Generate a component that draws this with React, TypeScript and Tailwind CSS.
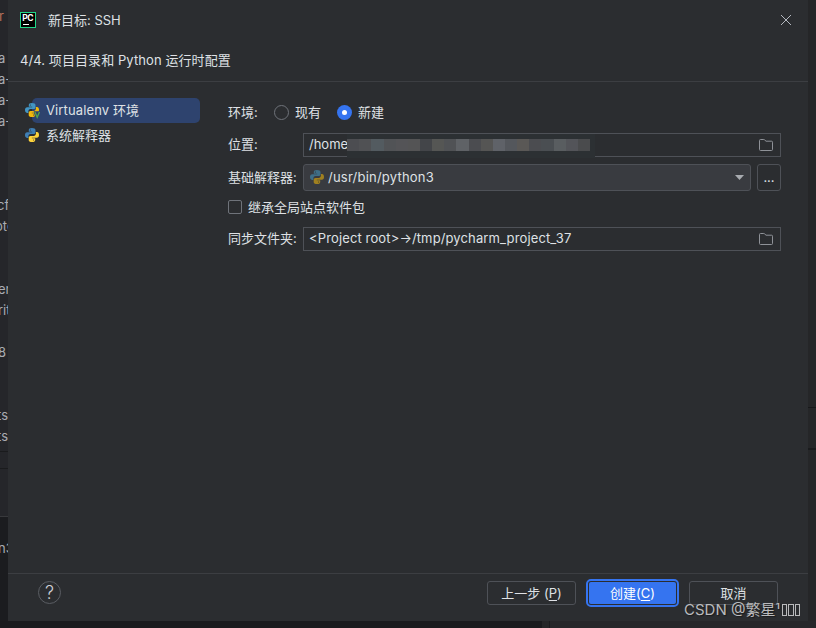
import { useState } from "react";
import type { ReactNode } from "react";

const editorLines = [
  { row: 0, text: "r", className: "-ml-px text-[#b8705a]" },
  { row: 2, text: "a", className: "-ml-0.5" },
  { row: 3, text: "a-", className: "-ml-0.5" },
  { row: 4, text: "a-", className: "-ml-0.5" },
  { row: 5, text: "a-", className: "-ml-0.5" },
  { row: 9, text: "cf", className: "-ml-[3px]" },
  { row: 10, text: "ote", className: "-ml-[5px]" },
  { row: 13, text: "er", className: "-ml-0.5" },
  { row: 14, text: "rit", className: "-ml-0.5" },
  { row: 16, text: "8", className: "-ml-0.5" },
  { row: 19, text: "ts", className: "-ml-[3px]" },
  { row: 20, text: "ts", className: "-ml-[3px]" },
];

const mosaic = [
  "#4c4d51", "#505154", "#535b60", "#515356", "#545457", "#545455", "#434549",
  "#555654", "#505255", "#5f6266", "#4b4c50", "#555554", "#5f6268", "#54575c",
  "#5a5856", "#4b4c50", "#4a4e52", "#595d60", "#535459", "#4a4b4d",
];

function PythonIcon({ dim = false, venv = false }: { dim?: boolean; venv?: boolean }) {
  const blue = dim ? "#3f6f88" : venv ? "#4295c4" : "#3f7fb5";
  const yellow = dim ? "#a08020" : venv ? "#f2b90c" : "#ffd43b";

  return (
    <svg width="16" height="16" viewBox="0 0 16 16" className="shrink-0 overflow-visible">
      <path
        d="M7.9 1C5.6 1 4.8 1.9 4.8 3.1V4.7H8.2V5.3H3.2C1.8 5.3 1 6.4 1 8.1s.8 2.8 2 2.8h1.4V9.2c0-1.2 1-2.1 2.2-2.1h3.2c1 0 1.7-.8 1.7-1.8V3.1C11.5 1.8 10.2 1 7.9 1Z"
        fill={blue}
      />
      <path
        d="M8.1 15c2.3 0 3.1-.9 3.1-2.1v-1.6H7.8v-.6h5c1.4 0 2.2-1.1 2.2-2.8s-.8-2.8-2-2.8h-1.1v1.7c0 1.2-1 2.1-2.2 2.1H6.4c-1 0-1.7.8-1.7 1.8v2.2C4.7 14.2 5.8 15 8.1 15Z"
        fill={yellow}
      />
      <circle cx="6.4" cy="2.9" r=".5" fill="#2b2d30" />
      <circle cx="9.6" cy="13.1" r=".5" fill="#2b2d30" />
      {venv && (
        <>
          <path d="M9.6 9.2H16.6V16H11.4Z" fill="#2e436e" />
          <path d="M10.9 9.9 13.2 15.3 15.5 9.9" fill="none" stroke="#57a64a" strokeWidth="1.3" />
        </>
      )}
    </svg>
  );
}

function FolderIcon() {
  return (
    <svg width="16" height="16" viewBox="0 0 16 16" fill="none" className="ml-auto shrink-0">
      <path
        d="M1.5 3.5a1 1 0 0 1 1-1h3.3c.3 0 .5.1.7.3L8 4.2h5.5a1 1 0 0 1 1 1v7.3a1 1 0 0 1-1 1h-11a1 1 0 0 1-1-1Z"
        stroke="#8f9298"
      />
    </svg>
  );
}

function Radio({ label, checked, onSelect }: { label: string; checked: boolean; onSelect: () => void }) {
  return (
    <button onClick={onSelect} className="flex items-center gap-1.5">
      <span
        className={
          checked
            ? "flex size-[15px] items-center justify-center rounded-full bg-[#3574f0]"
            : "size-[15px] rounded-full border border-[#6f737a]"
        }
      >
        {checked && <span className="size-[5px] rounded-full bg-white" />}
      </span>
      {label}
    </button>
  );
}

function Row({ label, children }: { label: string; children: ReactNode }) {
  return (
    <div className="flex items-center">
      <span className="w-[75px] shrink-0 pb-0.5 whitespace-nowrap">{label}</span>
      {children}
    </div>
  );
}

export default function App() {
  const [mode, setMode] = useState("new");
  const [inherit, setInherit] = useState(false);

  return (
    <div className="relative flex h-[628px] w-[816px] flex-col overflow-hidden bg-[#1e1f22] font-['Inter','Noto_Sans_CJK_SC',sans-serif] text-[13px] leading-5 text-[#dfe1e5]">
      <div className="flex h-[621px]">
        {/* Editor behind the dialog, left edge */}
        <div className="flex w-2 shrink-0 flex-col overflow-hidden bg-[#25262a] whitespace-nowrap text-[#a9acb2]">
          <div className="grid h-[451px] auto-rows-[21px] grid-cols-[8px] pt-1.5 leading-[21px]">
            {editorLines.map((line) => (
              <span key={line.row} className={line.className} style={{ gridRow: line.row + 1 }}>
                {line.text}
              </span>
            ))}
          </div>
          <div className="h-[18px] border-y border-[#1a1b1d]" />
          <div className="h-12 border-b border-[#38393c]" />
          <div className="grow bg-[#1b1c1f] pt-[21px]">
            <span className="-ml-0.5">n3</span>
          </div>
        </div>

        <div className="flex w-[800px] shrink-0 flex-col bg-[#2b2d30]">
          <div className="flex h-10 items-center pr-4 pl-3">
            <svg width="16" height="16" viewBox="0 0 16 16">
              <rect x=".5" y=".5" width="15" height="15" fill="#000" stroke="#21d789" />
              <text x="2.3" y="9" fontSize="8.5" fontWeight="700" fill="#fff" textLength="11.2">PC</text>
              <rect x="3" y="12" width="6" height="1" fill="#fff" />
            </svg>
            <span className="ml-3">新目标: SSH</span>
            <svg width="12" height="12" viewBox="0 0 12 12" className="ml-auto" stroke="#b4b8bf">
              <path d="M1 1 11 11M11 1 1 11" />
            </svg>
          </div>
          <div className="flex h-[42px] items-center border-b border-[#3c3e42] pb-0.5 pl-3 tracking-[0.08px]">
            4/4. 项目目录和 Python 运行时配置
          </div>

          <div className="flex h-[491px]">
            <div className="w-[192px] pt-4 pl-4">
              <div className="flex h-[25px] items-center">
                <span className="z-10 -mr-2 flex pb-px"><PythonIcon venv /></span>
                <span className="flex h-full grow items-center rounded-[5px] bg-[#2e436e] pb-px pl-[14px] tracking-[0.12px]">
                  Virtualenv 环境
                </span>
              </div>
              <div className="flex h-[25px] items-center gap-[6px] pb-0.5">
                <PythonIcon />
                系统解释器
              </div>
            </div>

            <div className="ml-7 w-[553px] pt-5">
              <div className="flex h-5 items-center">
                <span className="w-[46px]">环境:</span>
                <Radio label="现有" checked={mode === "existing"} onSelect={() => setMode("existing")} />
                <span className="w-4" />
                <Radio label="新建" checked={mode === "new"} onSelect={() => setMode("new")} />
              </div>
              <div className="mt-[11px]">
                <Row label="位置:">
                  <div className="flex h-6 grow items-center border border-[#4e5157] pr-1.5 pl-[5px]">
                    <span className="pb-0.5">/home</span>
                    {/* Masked part of the path, it also hides the lower border */}
                    <div className="-ml-px flex h-6 self-start bg-[#2c3033] pt-[5px] pr-[5px]">
                      {mosaic.map((color, i) => (
                        <span key={i} className="h-3 w-[12.15px]" style={{ backgroundColor: color }} />
                      ))}
                    </div>
                    <FolderIcon />
                  </div>
                </Row>
              </div>
              <div className="mt-[7px]">
                <Row label="基础解释器:">
                  <div className="flex h-[27px] w-[448px] items-center rounded-[3px] border border-[#4e5157] bg-[#393b40] pr-1.5 pl-[5px]">
                    <span className="flex pb-px"><PythonIcon dim /></span>
                    <span className="ml-[3px] pb-0.5 tracking-[0.22px]">/usr/bin/python3</span>
                    <svg width="9" height="5" viewBox="0 0 9 5" className="ml-auto">
                      <path d="M0 0H9L4.5 5Z" fill="#a8abb0" />
                    </svg>
                  </div>
                  <button className="ml-1.5 h-[27px] w-6 rounded-[3px] border border-[#4e5157] pb-0.5">...</button>
                </Row>
              </div>
              <button onClick={() => setInherit(!inherit)} className="mt-1.5 flex h-5 items-center gap-1.5">
                <span className={inherit ? "size-3.5 rounded-[2px] bg-[#3574f0]" : "size-3.5 rounded-[2px] border border-[#6f737a]"} />
                继承全局站点软件包
              </button>
              <div className="mt-2.5">
                <Row label="同步文件夹:">
                  <div className="flex h-6 grow items-center border border-[#4e5157] pr-1.5 pl-[5px]">
                    <span className="pb-0.5 tracking-[0.13px]">&lt;Project root&gt;→/tmp/pycharm_project_37</span>
                    <FolderIcon />
                  </div>
                </Row>
              </div>
            </div>
          </div>

          <div className="flex h-12 border-t border-[#3c3e42] px-[30px] pt-[7px]">
            <button className="flex size-[23px] items-center justify-center rounded-full border border-[#5a5d63] text-[18px] font-light text-[#ced0d6]">?</button>
            <button className="ml-auto h-6 w-[89px] rounded-[3px] border border-[#4e5157] leading-[22px]">
              上一步 (<span className="underline underline-offset-2">P</span>)
            </button>
            <button className="-mt-0.5 ml-2.5 h-7 w-[93px] rounded-[5px] border-2 border-[#3574f0] bg-[#2b2d30] p-px">
              <span className="block h-[22px] rounded-[2px] bg-[#3574f0] leading-[22px] text-white">
                创建(<span className="underline underline-offset-2">C</span>)
              </span>
            </button>
            <button className="ml-2.5 h-6 w-[89px] rounded-[3px] border border-[#4e5157] leading-[22px]">取消</button>
          </div>
        </div>

        {/* Editor behind the dialog, right edge */}
        <div className="w-2 shrink-0 bg-[#252628]">
          <div className="h-[408px] border-b border-[#17181a]" />
          <div className="h-[42px] border-b-2 border-[#1a1b1d]" />
        </div>
      </div>
      <div className="flex h-[7px]">
        <div className="w-[542px] bg-[#1a1b1e]" />
        <div className="w-2 border-r border-[#1b1c1e] bg-[#252628]" />
        <div className="grow bg-[#26272a]" />
      </div>

      <div className="absolute top-[600px] left-[684px] flex items-center text-[15px] whitespace-nowrap text-[#b9babc] [text-shadow:1px_1px_1px_#1119]">
        CSDN @繁星¹
        <span className="ml-0.5 flex gap-px">
          <span className="h-3 w-[5.5px] border border-[#b9babc]" />
          <span className="h-3 w-[5.5px] border border-[#b9babc]" />
          <span className="h-3 w-[5.5px] border border-[#b9babc]" />
        </span>
      </div>
    </div>
  );
}
